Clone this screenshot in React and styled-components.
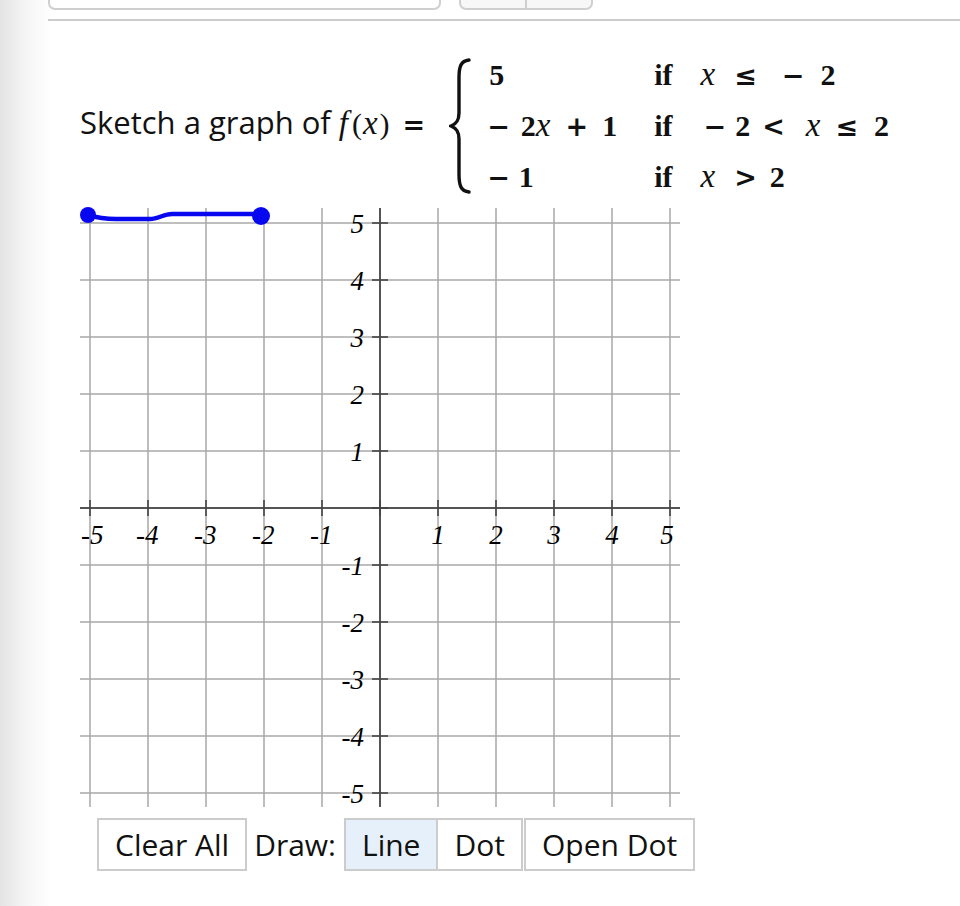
import styled, { createGlobalStyle } from 'styled-components'

const GlobalStyle = createGlobalStyle`
  html, body {
    margin: 0;
    padding: 0;
  }
  body {
    background: linear-gradient(90deg, #e4e4e4 0px, #f6f6f6 28px, #ffffff 52px);
    font-family: "Open Sans", "Liberation Sans", sans-serif;
    color: #111;
    overflow: hidden;
  }
`

const Page = styled.div`
  padding-left: 48px;
  height: 906px;
  box-sizing: border-box;
`

const TopBar = styled.div`
  display: flex;
  gap: 18px;
  margin-top: -30px;
  height: 40px;
`

const InputBox = styled.div`
  width: ${p => p.$w}px;
  height: 100%;
  box-sizing: border-box;
  border: 2px solid #cfcfcf;
  border-radius: 7px;
  background: ${p => (p.$grey ? '#f7f7f7' : '#fff')};
  display: flex;
`

const BoxCell = styled.div`
  flex: 1;
  & + & {
    border-left: 2px solid #cfcfcf;
  }
`

const Rule = styled.div`
  margin-top: 9px;
  border-top: 2px solid #cccccc;
`

const Content = styled.div`
  padding-left: 32px;
`

const Prompt = styled.div`
  display: flex;
  align-items: center;
  margin-top: 28px;
`

const Lead = styled.span`
  font-size: 31px;
  margin-bottom: 8px;
  white-space: nowrap;
`

const MathInline = styled.span`
  font-family: "Liberation Serif", "Times New Roman", serif;
  font-size: 30px;
  margin-left: 8px;
  margin-bottom: 5px;
  white-space: nowrap;
  display: flex;
  align-items: baseline;
`

const G = styled.span`
  display: inline-block;
  margin-left: ${p => p.$ml || 0}px;
  font-style: ${p => (p.$it ? 'italic' : 'normal')};
  font-weight: ${p => (p.$it || p.$thin ? 400 : 700)};
  ${p => p.$it && 'font-size: 33px;'}
  ${p =>
    p.$op &&
    `
    font-family: "DejaVu Serif", serif;
    font-weight: 700;
    font-size: 27px;
  `}
`

const BraceSvg = styled.svg`
  display: block;
  flex: none;
  margin-left: 24px;
  margin-right: 18px;
`

const Cases = styled.div`
  display: grid;
  grid-template-columns: 165px auto;
  font-family: "Liberation Serif", "Times New Roman", serif;
  font-size: 30px;
  line-height: 51px;
  white-space: nowrap;
`

const Cell = styled.div`
  height: 51px;
`

const GraphSvg = styled.svg`
  display: block;
`

const Toolbar = styled.div`
  display: flex;
  align-items: center;
  margin-top: 6px;
  margin-left: 17px;
`

const Button = styled.button`
  font-family: "Open Sans", "Liberation Sans", sans-serif;
  font-size: 30px;
  color: #111;
  height: 53px;
  box-sizing: border-box;
  padding: 0 16px;
  line-height: 49px;
  border: 2px solid #cccccc;
  border-radius: 0;
  background: ${p => (p.$active ? '#e6f0fa' : '#fff')};
  margin-left: ${p => p.$ml || 0}px;
  cursor: pointer;
`

const DrawLabel = styled.span`
  font-size: 30px;
  margin: 0 8px 0 7px;
`

const X = u => 10 + (u + 5) * 58
const Y = v => 21 + (5 - v) * 57
const units = [-5, -4, -3, -2, -1, 0, 1, 2, 3, 4, 5]

const Brace = () => (
  <BraceSvg width="22" height="136" viewBox="0 0 22 136">
    <path
      d="M20 2 C12 3, 10 8, 10 20 L10 55 C10 63, 7 66, 2 68 C7 70, 10 73, 10 81 L10 116 C10 128, 12 133, 20 134"
      fill="none"
      stroke="#111"
      strokeWidth="3.4"
      strokeLinecap="round"
    />
  </BraceSvg>
)

const Graph = () => (
  <GraphSvg width="610" height="610" viewBox="0 0 610 610">
    {units.map(u => (
      <line key={'v' + u} x1={X(u)} y1="6" x2={X(u)} y2="605" stroke="#bdbdbd" strokeWidth="2" />
    ))}
    {units.map(v => (
      <line key={'h' + v} x1="0" y1={Y(v)} x2="600" y2={Y(v)} stroke="#a8a8a8" strokeWidth="1.6" />
    ))}
    <line x1="0" y1={Y(0)} x2="600" y2={Y(0)} stroke="#555" strokeWidth="2" />
    <line x1={X(0)} y1="6" x2={X(0)} y2="605" stroke="#555" strokeWidth="2" />
    {units.map(u => (
      <line key={'tx' + u} x1={X(u)} y1={Y(0) - 8} x2={X(u)} y2={Y(0) + 8} stroke="#444" strokeWidth="1.6" />
    ))}
    {units.map(v => (
      <line key={'ty' + v} x1={X(0) - 8} y1={Y(v)} x2={X(0) + 8} y2={Y(v)} stroke="#444" strokeWidth="1.6" />
    ))}
    <g fontFamily='"Liberation Serif", "Times New Roman", serif' fontStyle="italic" fontSize="27" fill="#000">
      {units
        .filter(u => u !== 0)
        .map(u =>
          u < 0 ? (
            <text key={'lx' + u} x={Math.max(X(u) - 12, 1)} y={Y(0) + 36} textAnchor="start">
              {'-' + -u}
            </text>
          ) : (
            <text key={'lx' + u} x={X(u) - (u === 5 ? 3 : 0)} y={Y(0) + 36} textAnchor="middle">
              {u}
            </text>
          )
        )}
      {units
        .filter(v => v !== 0)
        .map(v => (
          <text key={'ly' + v} x={X(0) - 16} y={Y(v) + 10} textAnchor="end">
            {v < 0 ? '-' + -v : v}
          </text>
        ))}
    </g>
    <path
      d="M8 13 C18 16, 26 17, 36 17 L70 17 C78 17, 84 12, 92 12 L181 12"
      fill="none"
      stroke="#0808f0"
      strokeWidth="4.5"
      strokeLinecap="round"
    />
    <circle cx="8" cy="13" r="8" fill="#0808f0" />
    <circle cx="181" cy="14" r="9" fill="#0808f0" />
  </GraphSvg>
)

export default function App() {
  return (
    <>
      <GlobalStyle />
      <Page>
        <TopBar>
          <InputBox $w={393} />
          <InputBox $w={134} $grey>
            <BoxCell />
            <BoxCell />
          </InputBox>
        </TopBar>
        <Rule />
        <Content>
          <Prompt>
            <Lead>Sketch a graph of</Lead>
            <MathInline>
              <G $it>f</G>
              <G $thin $ml={4}>(</G>
              <G $it $ml={1}>x</G>
              <G $thin $ml={2}>)</G>
              <G $op $ml={13}>=</G>
            </MathInline>
            <Brace />
            <Cases>
              <Cell>
                <G>5</G>
              </Cell>
              <Cell>
                <G>if</G>
                <G $it $ml={28}>x</G>
                <G $op $ml={19}>≤</G>
                <G $op $ml={25}>−</G>
                <G $ml={16}>2</G>
              </Cell>
              <Cell>
                <G $op $ml={-2}>−</G>
                <G $ml={11}>2</G>
                <G $it>x</G>
                <G $op $ml={15}>+</G>
                <G $ml={14}>1</G>
              </Cell>
              <Cell>
                <G>if</G>
                <G $op $ml={31}>−</G>
                <G $ml={9}>2</G>
                <G $op $ml={12}>&lt;</G>
                <G $it $ml={21}>x</G>
                <G $op $ml={15}>≤</G>
                <G $ml={16}>2</G>
              </Cell>
              <Cell>
                <G $op $ml={-2}>−</G>
                <G $ml={9}>1</G>
              </Cell>
              <Cell>
                <G>if</G>
                <G $it $ml={28}>x</G>
                <G $op $ml={19}>&gt;</G>
                <G $ml={13}>2</G>
              </Cell>
            </Cases>
          </Prompt>
          <Graph />
          <Toolbar>
            <Button>Clear All</Button>
            <DrawLabel>Draw:</DrawLabel>
            <Button $active>Line</Button>
            <Button $ml={-2}>Dot</Button>
            <Button $ml={1}>Open Dot</Button>
          </Toolbar>
        </Content>
      </Page>
    </>
  )
}
